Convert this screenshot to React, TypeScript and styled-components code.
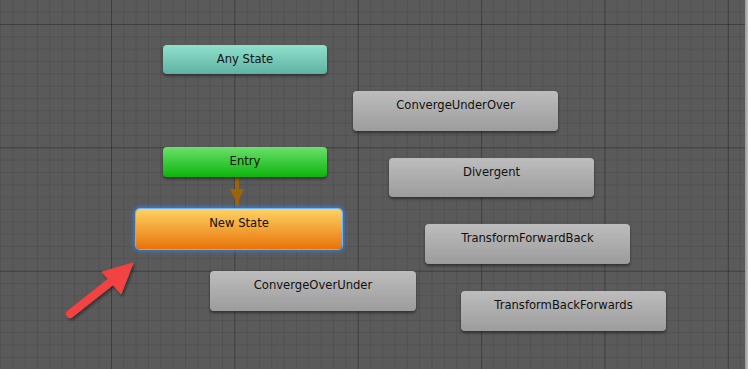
import React from "react";
import styled, { createGlobalStyle, css } from "styled-components";

const GlobalStyle = createGlobalStyle`
  html, body {
    margin: 0;
    padding: 0;
    background: #595959;
  }
  #root {
    width: 748px;
    height: 369px;
  }
`;

const Editor = styled.div`
  display: flex;
  width: 748px;
  height: 369px;
  overflow: hidden;
  font-family: "DejaVu Sans", "Liberation Sans", sans-serif;
`;

const Canvas = styled.div`
  position: relative;
  flex: 1;
  height: 100%;
  background-color: #5a5a5a;
  background-image:
    linear-gradient(to right, rgba(0, 0, 0, 0.24) 1px, transparent 1px),
    linear-gradient(to bottom, rgba(0, 0, 0, 0.24) 1px, transparent 1px),
    linear-gradient(to right, rgba(0, 0, 0, 0.09) 1px, transparent 1px),
    linear-gradient(to bottom, rgba(0, 0, 0, 0.09) 1px, transparent 1px);
  background-size: 123.4px 123.4px, 123.4px 123.4px, 12.34px 12.34px, 12.34px 12.34px;
  background-position: 111px 24px, 111px 24px, 111px 24px, 111px 24px;
`;

const ScrollEdge = styled.div`
  width: 3px;
  height: 100%;
  background: linear-gradient(to right, #9a9a9a, #bdbdbd);
`;

type Kind = "any" | "entry" | "active" | "plain";

const skins: Record<Kind, ReturnType<typeof css>> = {
  any: css`
    background: linear-gradient(to bottom, #90e0cd, #5fb2a2);
  `,
  entry: css`
    background: linear-gradient(to bottom, #6be06b, #0cb50c);
  `,
  active: css`
    background: linear-gradient(to bottom, #ffd263, #e8730a);
    box-shadow: 0 0 0 1px #67b6ff, 0 0 4px 2px rgba(50, 140, 255, 0.75);
  `,
  plain: css`
    background: linear-gradient(to bottom, #bdbdbd, #9c9c9c);
  `,
};

const Node = styled.div<{ $x: number; $y: number; $w: number; $h: number; $kind: Kind }>`
  position: absolute;
  left: ${(p) => p.$x}px;
  top: ${(p) => p.$y}px;
  width: ${(p) => p.$w}px;
  height: ${(p) => p.$h}px;
  box-sizing: border-box;
  border-radius: 4px;
  box-shadow: 0 2px 3px rgba(0, 0, 0, 0.45);
  color: #111;
  font-size: 11.6px;
  line-height: 29px;
  text-align: center;
  white-space: nowrap;
  ${(p) => skins[p.$kind]}
`;

const Overlay = styled.svg`
  position: absolute;
  left: 0;
  top: 0;
  overflow: visible;
  pointer-events: none;
`;

const nodes: { label: string; x: number; y: number; w: number; h: number; kind: Kind }[] = [
  { label: "Any State", x: 163, y: 45, w: 164, h: 29, kind: "any" },
  { label: "ConvergeUnderOver", x: 353, y: 91, w: 205, h: 40, kind: "plain" },
  { label: "Entry", x: 163, y: 147, w: 164, h: 30, kind: "entry" },
  { label: "Divergent", x: 389, y: 158, w: 205, h: 39, kind: "plain" },
  { label: "New State", x: 136, y: 209, w: 206, h: 40, kind: "active" },
  { label: "TransformForwardBack", x: 425, y: 224, w: 205, h: 40, kind: "plain" },
  { label: "ConvergeOverUnder", x: 210, y: 271, w: 206, h: 40, kind: "plain" },
  { label: "TransformBackForwards", x: 461, y: 291, w: 205, h: 40, kind: "plain" },
];

export default function App() {
  return (
    <>
      <GlobalStyle />
      <Editor>
        <Canvas>
          <Overlay width="745" height="369">
            {/* default transition entry -> new state */}
            <line x1="237" y1="177" x2="237" y2="206" stroke="#9a630d" strokeWidth="4" />
            <polygon points="230,189 244,189 237,204" fill="#9a630d" />
          </Overlay>
          {nodes.map((n) => (
            <Node key={n.label} $x={n.x} $y={n.y} $w={n.w} $h={n.h} $kind={n.kind}>
              {n.label}
            </Node>
          ))}
          <Overlay width="745" height="369">
            <defs>
              <filter id="arrowShadow" x="-20%" y="-20%" width="140%" height="140%">
                <feDropShadow dx="1.5" dy="2" stdDeviation="1.5" floodColor="#000" floodOpacity="0.45" />
              </filter>
            </defs>
            <g filter="url(#arrowShadow)" fill="#f24242" stroke="#f24242">
              <line x1="70" y1="314" x2="113" y2="280" strokeWidth="8" strokeLinecap="round" />
              <polygon points="133,263 102,272 121,294" strokeWidth="1" strokeLinejoin="round" />
            </g>
          </Overlay>
        </Canvas>
        <ScrollEdge />
      </Editor>
    </>
  );
}
